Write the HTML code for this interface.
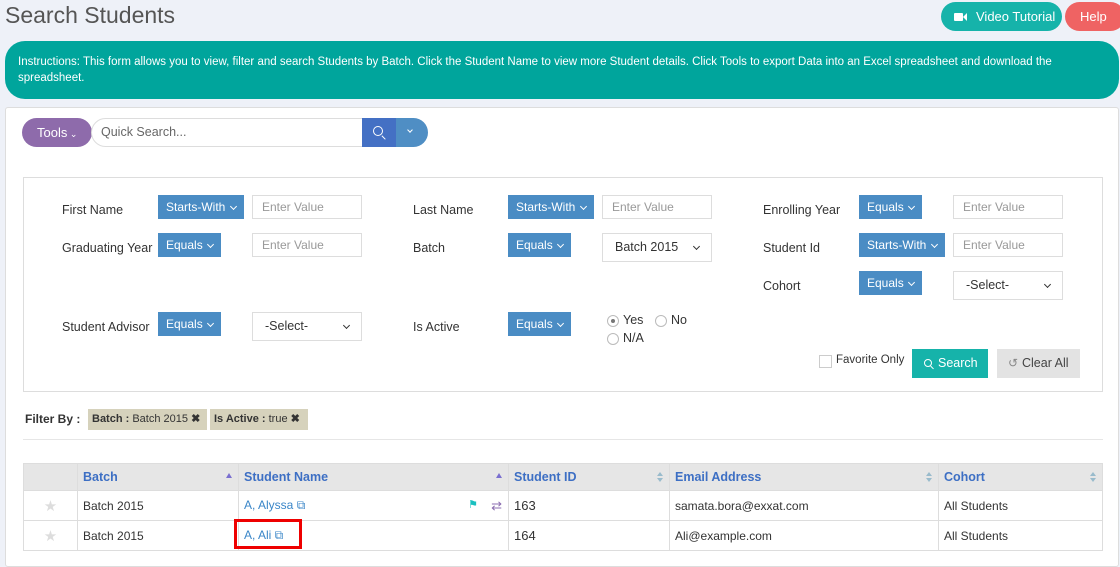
<!DOCTYPE html>
<html><head><meta charset="utf-8"><style>
*{box-sizing:border-box;margin:0;padding:0}
body{width:1120px;height:552px;overflow:hidden;background:#eef1f8;font-family:"Liberation Sans",sans-serif;position:relative;color:#333}
.a{position:absolute}
.lbl{position:absolute;font-size:12.5px;color:#333}
.btn{position:absolute;background:#4a8cc4;color:#fff;font-size:12px;height:24px;line-height:24px;padding-left:8px}
.btn:after{content:"";position:absolute;right:8px;top:9px;width:4px;height:4px;border-right:1.3px solid #fff;border-bottom:1.3px solid #fff;transform:rotate(45deg)}
.inp{position:absolute;width:110px;height:24px;border:1px solid #ddd;font-size:12px;color:#999;padding-left:9px;line-height:22px;background:#fff}
.sel{position:absolute;width:110px;height:29px;border:1px solid #ddd;font-size:12.5px;color:#333;padding-left:12px;line-height:27px;background:#fff}
.sel:after{content:"";position:absolute;right:12px;top:10px;width:4px;height:4px;border-right:1.3px solid #333;border-bottom:1.3px solid #333;transform:rotate(45deg)}
.radio{position:absolute;width:12px;height:12px;border:1px solid #bbb;border-radius:50%;background:#fff}
table{position:absolute;left:23px;top:463px;border-collapse:collapse;font-size:12px}
td,th{border:1px solid #ddd;height:30px;padding-left:5px;text-align:left;position:relative}
th{background:#e6e6e6;color:#3d6fc4;font-weight:bold;height:27px;font-size:12.5px}
a{color:#3a86c8;text-decoration:none}
.chip{position:absolute;top:409px;height:21px;background:#d6d2bc;font-size:11px;line-height:21px;padding-left:4px;white-space:nowrap}
.sa{position:absolute;right:6px;top:9px;width:0;height:0;border-left:3px solid transparent;border-right:3px solid transparent}
</style></head><body>
<div class="a" style="left:5px;top:2px;font-size:23px;color:#555">Search Students</div>
<div class="a" style="left:941px;top:2px;width:121px;height:29px;border-radius:15px;background:#16b3aa;color:#fff;font-size:13px;line-height:29px;padding-left:35px">Video Tutorial
<div class="a" style="left:13px;top:11px;width:9px;height:8px;background:#fff;border-radius:1px"></div><div class="a" style="left:22px;top:11px;width:0;height:0;border-top:4px solid transparent;border-bottom:4px solid transparent;border-right:4px solid #fff"></div></div>
<div class="a" style="left:1065px;top:2px;width:60px;height:29px;border-radius:15px;background:#ef6363;color:#fff;font-size:13px;line-height:29px;padding-left:15px">Help</div>
<div class="a" style="left:5px;top:41px;width:1114px;height:58px;border-radius:20px;background:#00a59c;color:#fff;font-size:11.5px;line-height:15.5px;padding:14px 0 0 13px">Instructions: This form allows you to view, filter and search Students by Batch. Click the Student Name to view more Student details. Click Tools to export Data into an Excel spreadsheet and download the<br>spreadsheet.</div>
<div class="a" style="left:5px;top:107px;width:1114px;height:460px;background:#fff;border:1px solid #ddd;border-radius:3px"></div>
<div class="a" style="left:22px;top:118px;width:70px;height:29px;border-radius:15px;background:#8e6bab;color:#fff;font-size:13px;line-height:29px;padding-left:15px">Tools<span style="font-size:9px"> ⌄</span></div>
<div class="a" style="left:91px;top:118px;width:275px;height:29px;border:1px solid #ddd;border-radius:15px 0 0 15px;font-size:12.5px;color:#666;line-height:27px;padding-left:9px;background:#fff">Quick Search...</div>
<div class="a" style="left:362px;top:118px;width:34px;height:29px;background:#4470c4"><div class="a" style="left:11px;top:8px;width:10px;height:10px;border:1.3px solid #fff;border-radius:50%"></div><div class="a" style="left:19px;top:19px;width:5px;height:1.3px;background:#fff;transform:rotate(45deg)"></div></div>
<div class="a" style="left:396px;top:118px;width:32px;height:29px;background:#4f8ec4;border-radius:0 15px 15px 0"><div class="a" style="left:12px;top:10px;width:4px;height:4px;border-right:1.2px solid #fff;border-bottom:1.2px solid #fff;transform:rotate(45deg)"></div></div>
<div class="a" style="left:23px;top:177px;width:1080px;height:215px;border:1px solid #ddd"></div>
<div class="lbl" style="left:62px;top:203px">First Name</div>
<div class="btn" style="left:158px;top:195px;width:86px">Starts-With</div><div class="inp" style="left:252px;top:195px">Enter Value</div>
<div class="lbl" style="left:62px;top:241px">Graduating Year</div>
<div class="btn" style="left:158px;top:233px;width:63px">Equals</div><div class="inp" style="left:252px;top:233px">Enter Value</div>
<div class="lbl" style="left:62px;top:320px">Student Advisor</div>
<div class="btn" style="left:158px;top:312px;width:63px">Equals</div><div class="sel" style="left:252px;top:312px">-Select-</div>
<div class="lbl" style="left:413px;top:203px">Last Name</div>
<div class="btn" style="left:508px;top:195px;width:86px">Starts-With</div><div class="inp" style="left:602px;top:195px">Enter Value</div>
<div class="lbl" style="left:413px;top:241px">Batch</div>
<div class="btn" style="left:508px;top:233px;width:63px">Equals</div><div class="sel" style="left:602px;top:233px">Batch 2015</div>
<div class="lbl" style="left:413px;top:320px">Is Active</div>
<div class="btn" style="left:508px;top:312px;width:63px">Equals</div>
<div class="radio" style="left:607px;top:315px"><div class="a" style="left:3px;top:3px;width:4px;height:4px;border-radius:50%;background:#777"></div></div><div class="lbl" style="left:623px;top:313px">Yes</div>
<div class="radio" style="left:655px;top:315px"></div><div class="lbl" style="left:671px;top:313px">No</div>
<div class="radio" style="left:607px;top:333px"></div><div class="lbl" style="left:623px;top:331px">N/A</div>
<div class="lbl" style="left:763px;top:203px">Enrolling Year</div>
<div class="btn" style="left:859px;top:195px;width:63px">Equals</div><div class="inp" style="left:953px;top:195px">Enter Value</div>
<div class="lbl" style="left:763px;top:241px">Student Id</div>
<div class="btn" style="left:859px;top:233px;width:86px">Starts-With</div><div class="inp" style="left:953px;top:233px">Enter Value</div>
<div class="lbl" style="left:763px;top:279px">Cohort</div>
<div class="btn" style="left:859px;top:271px;width:63px">Equals</div><div class="sel" style="left:953px;top:271px">-Select-</div>
<div class="a" style="left:819px;top:355px;width:13px;height:13px;border:1px solid #ccc"></div><div class="a" style="left:836px;top:354px;font-size:11.5px">Favorite Only</div>
<div class="a" style="left:912px;top:349px;width:76px;height:29px;background:#16b3aa;color:#fff;font-size:12.5px;line-height:29px;padding-left:26px">Search<div class="a" style="left:12px;top:10px;width:8px;height:8px;border:1.3px solid #fff;border-radius:50%"></div><div class="a" style="left:18px;top:18px;width:4px;height:1.3px;background:#fff;transform:rotate(45deg)"></div></div>
<div class="a" style="left:997px;top:349px;width:83px;height:29px;background:#e3e3e3;color:#444;font-size:12.5px;line-height:29px;padding-left:25px">Clear All<span class="a" style="left:11px;top:0;color:#888;font-size:12px">↺</span></div>
<div class="a" style="left:25px;top:412px;font-size:12px;font-weight:bold">Filter By :</div>
<div class="chip" style="left:88px;width:119px"><b>Batch :</b> Batch 2015 <b>✖</b></div>
<div class="chip" style="left:210px;width:98px"><b>Is Active :</b> true <b>✖</b></div>
<div class="a" style="left:23px;top:439px;width:1080px;height:1px;background:#e6e6e6"></div>
<table>
<tr><th style="width:54px"></th><th style="width:161px">Batch<span class="sa" style="border-bottom:5px solid #7a6fd0"></span></th><th style="width:270px">Student Name<span class="sa" style="border-bottom:5px solid #7a6fd0"></span></th><th style="width:161px">Student ID<span class="sa" style="border-bottom:4px solid #9bc;top:8px"></span><span class="sa" style="border-top:4px solid #9bc;top:14px"></span></th><th style="width:269px">Email Address<span class="sa" style="border-bottom:4px solid #9bc;top:8px"></span><span class="sa" style="border-top:4px solid #9bc;top:14px"></span></th><th style="width:164px">Cohort<span class="sa" style="border-bottom:4px solid #9bc;top:8px"></span><span class="sa" style="border-top:4px solid #9bc;top:14px"></span></th></tr>
<tr><td style="text-align:center;color:#ddd;font-size:15px;padding:0">★</td><td>Batch 2015</td><td><a>A, Alyssa ⧉</a><span class="a" style="right:30px;top:7px;color:#19c0c0;font-size:11px">⚑</span><span class="a" style="right:6px;top:7px;color:#8b6db0;font-size:13px">⇄</span></td><td style="font-size:13px">163</td><td>samata.bora@exxat.com</td><td>All Students</td></tr>
<tr><td style="text-align:center;color:#ddd;font-size:15px;padding:0">★</td><td>Batch 2015</td><td><a>A, Ali ⧉</a></td><td style="font-size:13px">164</td><td>Ali@example.com</td><td>All Students</td></tr>
</table>
<div class="a" style="left:234px;top:519px;width:68px;height:30px;border:3px solid #e00"></div>
</body></html>
